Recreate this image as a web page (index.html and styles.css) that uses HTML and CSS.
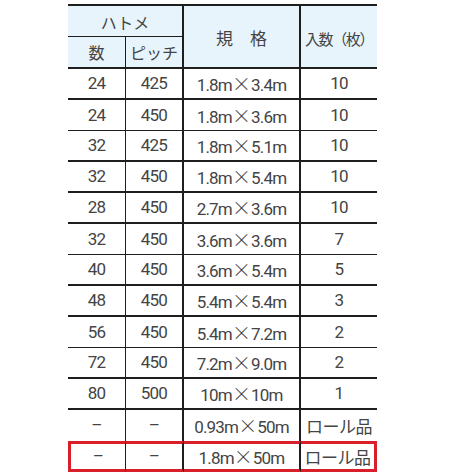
FILE: index.html
```html
<!DOCTYPE html>
<html lang="ja">
<head>
<meta charset="utf-8">
<link rel="stylesheet" href="styles.css">
</head>
<body>
<table class="spec">
  <thead>
    <tr class="h1">
      <th class="c12 jp" colspan="2">ハトメ</th>
      <th class="c3 jp kikaku" rowspan="2">規　格</th>
      <th class="c4 jp irisu" rowspan="2">入数（枚）</th>
    </tr>
    <tr class="h2">
      <th class="c1 jp">数</th>
      <th class="c2 jp">ピッチ</th>
    </tr>
  </thead>
  <tbody>
    <tr class="thick"><td class="c1">24</td><td class="c2">425</td><td class="c3">1.8m<span class="x">×</span>3.4m</td><td class="c4">10</td></tr>
    <tr class="thin"><td class="c1">24</td><td class="c2">450</td><td class="c3">1.8m<span class="x">×</span>3.6m</td><td class="c4">10</td></tr>
    <tr class="thick"><td class="c1">32</td><td class="c2">425</td><td class="c3">1.8m<span class="x">×</span>5.1m</td><td class="c4">10</td></tr>
    <tr class="thick"><td class="c1">32</td><td class="c2">450</td><td class="c3">1.8m<span class="x">×</span>5.4m</td><td class="c4">10</td></tr>
    <tr class="thick"><td class="c1">28</td><td class="c2">450</td><td class="c3">2.7m<span class="x">×</span>3.6m</td><td class="c4">10</td></tr>
    <tr class="thin"><td class="c1">32</td><td class="c2">450</td><td class="c3">3.6m<span class="x">×</span>3.6m</td><td class="c4">7</td></tr>
    <tr class="thick"><td class="c1">40</td><td class="c2">450</td><td class="c3">3.6m<span class="x">×</span>5.4m</td><td class="c4">5</td></tr>
    <tr class="thick"><td class="c1">48</td><td class="c2">450</td><td class="c3">5.4m<span class="x">×</span>5.4m</td><td class="c4">3</td></tr>
    <tr class="thin"><td class="c1">56</td><td class="c2">450</td><td class="c3">5.4m<span class="x">×</span>7.2m</td><td class="c4">2</td></tr>
    <tr class="thick"><td class="c1">72</td><td class="c2">450</td><td class="c3">7.2m<span class="x">×</span>9.0m</td><td class="c4">2</td></tr>
    <tr class="thick"><td class="c1">80</td><td class="c2">500</td><td class="c3">10m<span class="x">×</span>10m</td><td class="c4">1</td></tr>
    <tr class="none"><td class="c1 dash">–</td><td class="c2 dash">–</td><td class="c3">0.93m<span class="x">×</span>50m</td><td class="c4 jp roll">ロール品</td></tr>
    <tr class="hl"><td class="c1 dash">–</td><td class="c2 dash">–</td><td class="c3">1.8m<span class="x">×</span>50m</td><td class="c4 jp roll">ロール品</td></tr>
  </tbody>
</table>
</body>
</html>
```
FILE: styles.css
```css
html, body {
  margin: 0;
  padding: 0;
  background: #ffffff;
}

.spec {
  margin: 4px 0 0 68px;
  border-collapse: separate;
  border-spacing: 0;
  table-layout: fixed;
  width: 309px;
  color: #444444;
  font-family: Roboto, "Liberation Sans", sans-serif;
  font-size: 17px;
  letter-spacing: -0.8px;
}

.spec th,
.spec td {
  box-sizing: border-box;
  padding: 0;
  text-align: center;
  vertical-align: middle;
  font-weight: normal;
  border-color: #1e1e1e;
  border-style: solid;
  border-width: 0;
  line-height: 1;
}

.c1 { width: 58px; }
.c2 { width: 58px; }
.c3 { width: 117px; }
.c4 { width: 76px; }

.jp {
  font-family: "Noto Sans CJK JP", "Noto Sans", sans-serif;
  font-weight: 300;
  letter-spacing: 0;
}

/* header */
.spec thead th {
  background: #e8f4fb;
}
.h1 th {
  border-top-width: 2px;
  height: 33px;
}
.h1 .c12 {
  border-bottom-width: 1px;
  border-right-width: 2px;
  font-size: 16px;
  padding-top: 2px;
}
.h1 .kikaku {
  border-right-width: 2px;
  border-bottom-width: 2px;
  font-size: 17px;
  padding-top: 2px;
}
.h1 .irisu {
  border-bottom-width: 2px;
  font-size: 15px;
  letter-spacing: -1.4px;
  padding-top: 3px;
}
.h2 th {
  height: 32px;
  border-bottom-width: 2px;
  font-size: 16px;
}
.h2 .c1 { border-right-width: 1px; }
.h2 .c2 { border-right-width: 2px; }

/* body */
.spec tbody td {
  height: 31px;
}
.spec tbody .c1 { border-right-width: 1px; }
.spec tbody .c2 { border-right-width: 2px; }
.spec tbody .c3 { border-right-width: 2px; }

.thick td { border-bottom-width: 2px; }
.thin td { border-bottom-width: 1px; }
.none td { border-bottom-width: 0; }

.x {
  font-family: "Noto Sans CJK JP", sans-serif;
  font-weight: 200;
  font-size: 19px;
  letter-spacing: 0;
  padding: 0;
}

.dash {
  font-weight: 500;
}

.roll {
  font-size: 17px;
  letter-spacing: -0.5px;
}

.hl td {
  height: 32px;
  border-top: 3px solid #d9202a;
  border-bottom: 3px solid #d9202a;
}
.hl .c1 { border-left: 3px solid #d9202a; }
.hl .c4 { border-right: 3px solid #d9202a; }
```
